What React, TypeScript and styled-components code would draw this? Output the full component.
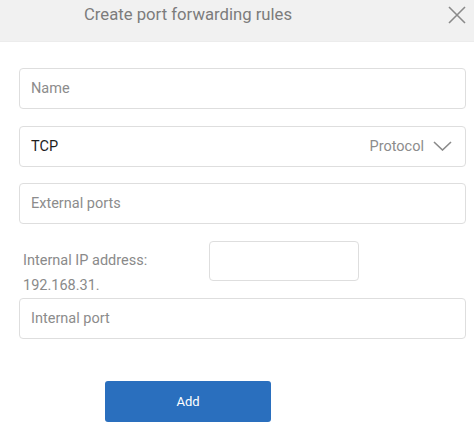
import React from "react";
import styled, { createGlobalStyle } from "styled-components";

const Global = createGlobalStyle`
  body {
    margin: 0;
    background: #ffffff;
    font-family: Roboto, "Liberation Sans", Arial, sans-serif;
  }
`;

const Page = styled.div`
  width: 474px;
  height: 439px;
  background: #ffffff;
`;

const Header = styled.div`
  height: 42px;
  background: #f1f1f1;
  display: flex;
  align-items: center;
  justify-content: space-between;
  padding: 0 7px 0 84px;
  box-sizing: border-box;
  border-bottom: 1px solid #ececec;
`;

const Title = styled.h1`
  margin: 0;
  font-size: 16.7px;
  font-weight: 400;
  color: #7c7c7c;
  margin-top: -12px;
`;

const Close = styled.button`
  border: none;
  background: none;
  padding: 0;
  width: 20px;
  height: 20px;
  margin-top: -11px;
  display: flex;
  align-items: center;
  justify-content: center;
`;

const Form = styled.div`
  display: flex;
  flex-direction: column;
  gap: 16.5px;
  padding: 26px 8px 0 19px;
`;

const Field = styled.div`
  height: 41px;
  box-sizing: border-box;
  border: 1px solid #dedede;
  border-radius: 4px;
  display: flex;
  align-items: center;
  padding: 0 13px 0 11px;
`;

const Input = styled.input`
  border: none;
  outline: none;
  flex: 1;
  min-width: 0;
  font-family: inherit;
  font-size: 14.5px;
  color: #222;
  background: transparent;
  padding: 0;
  &::placeholder {
    color: #8c8c8c;
  }
`;

const Value = styled.span`
  flex: 1;
  font-size: 14.5px;
  color: #1e1e1e;
`;

const Hint = styled.span`
  font-size: 14.5px;
  color: #8c8c8c;
  margin-right: 9px;
`;

const IpRow = styled.div`
  display: flex;
  align-items: flex-start;
  margin-bottom: -16.5px;
`;

const IpLabel = styled.div`
  width: 190px;
  padding: 7px 0 0 4px;
  box-sizing: border-box;
  font-size: 14.5px;
  line-height: 25px;
  color: #8a8a8a;
`;

const IpBox = styled.input`
  width: 150px;
  height: 40px;
  box-sizing: border-box;
  border: 1px solid #dedede;
  border-radius: 4px;
  outline: none;
  padding: 0 10px;
  font-family: inherit;
  font-size: 14px;
`;

const Footer = styled.div`
  padding: 42px 0 0 105px;
`;

const AddButton = styled.button`
  width: 166px;
  height: 41px;
  border: none;
  border-radius: 3px;
  background: #2a6fbe;
  color: #ffffff;
  font-family: inherit;
  font-size: 13px;
`;

const App: React.FC = () => {
  return (
    <Page>
      <Global />
      <Header>
        <Title>Create port forwarding rules</Title>
        <Close aria-label="close">
          <svg width="18" height="18" viewBox="0 0 18 18">
            <path d="M1 1 L17 17 M17 1 L1 17" stroke="#8a8a8a" strokeWidth="1.6" fill="none" />
          </svg>
        </Close>
      </Header>
      <Form>
        <Field>
          <Input placeholder="Name" />
        </Field>
        <Field>
          <Value>TCP</Value>
          <Hint>Protocol</Hint>
          <svg width="19" height="10" viewBox="0 0 19 10">
            <path d="M1 1 L9.5 9 L18 1" stroke="#8a8a8a" strokeWidth="1.6" fill="none" />
          </svg>
        </Field>
        <Field>
          <Input placeholder="External ports" />
        </Field>
        <IpRow>
          <IpLabel>
            Internal IP address:
            <br />
            192.168.31.
          </IpLabel>
          <IpBox />
        </IpRow>
        <Field>
          <Input placeholder="Internal port" />
        </Field>
      </Form>
      <Footer>
        <AddButton>Add</AddButton>
      </Footer>
    </Page>
  );
};

export default App;
